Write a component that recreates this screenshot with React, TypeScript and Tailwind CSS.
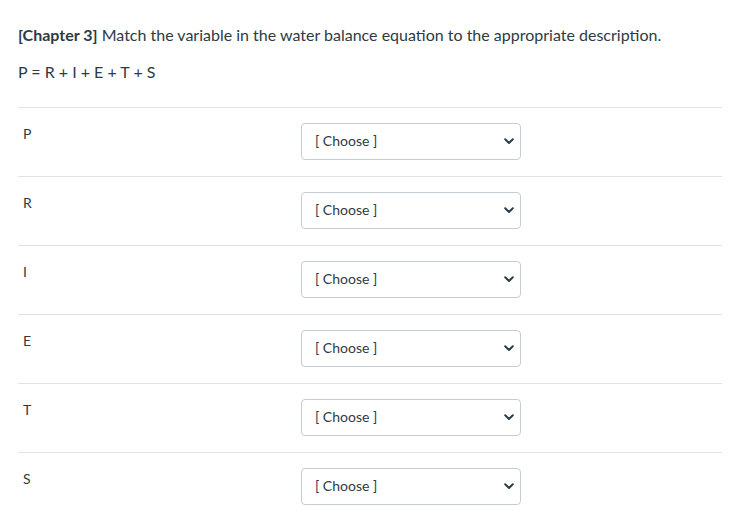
import React from 'react';

const variables = ['P', 'R', 'I', 'E', 'T', 'S'];

const Chevron = () => (
  <svg width="10" height="7" viewBox="0 0 10 7" className="pointer-events-none absolute right-[7px] top-[15px]">
    <path d="M1.2 1.3 L5 5 L8.8 1.3" fill="none" stroke="#2d3b45" strokeWidth="2" strokeLinecap="round" strokeLinejoin="round" />
  </svg>
);

export default function App() {
  return (
    <div className="min-h-screen bg-white text-[#2d3b45] font-['Lato','Noto_Sans',sans-serif]">
      <div className="pl-[18px] pr-[8px] pt-[23px]">
        <p className="text-base leading-6">
          <strong className="font-bold">[Chapter 3]</strong> Match the variable in the water balance equation to the appropriate description.
        </p>
        <p className="mt-[13px] text-base leading-6">P = R + I + E + T + S</p>

        <div className="mt-[23px]">
          {variables.map((v) => (
            <div key={v} className="flex items-start border-t border-[#e0e3e5] pt-[15px] pb-[16px]">
              <div className="w-[283px] pl-[5px] pt-[1px] text-sm leading-5">{v}</div>
              <div className="relative w-[220px]">
                <select
                  defaultValue=""
                  className="h-[37px] w-full appearance-none rounded-[4px] border border-[#c7cdd1] bg-white pl-[13px] pr-8 pb-[1px] text-sm text-[#2d3b45] outline-none font-['Lato',sans-serif]"
                >
                  <option value="">[ Choose ]</option>
                </select>
                <Chevron />
              </div>
            </div>
          ))}
        </div>
      </div>
    </div>
  );
}
